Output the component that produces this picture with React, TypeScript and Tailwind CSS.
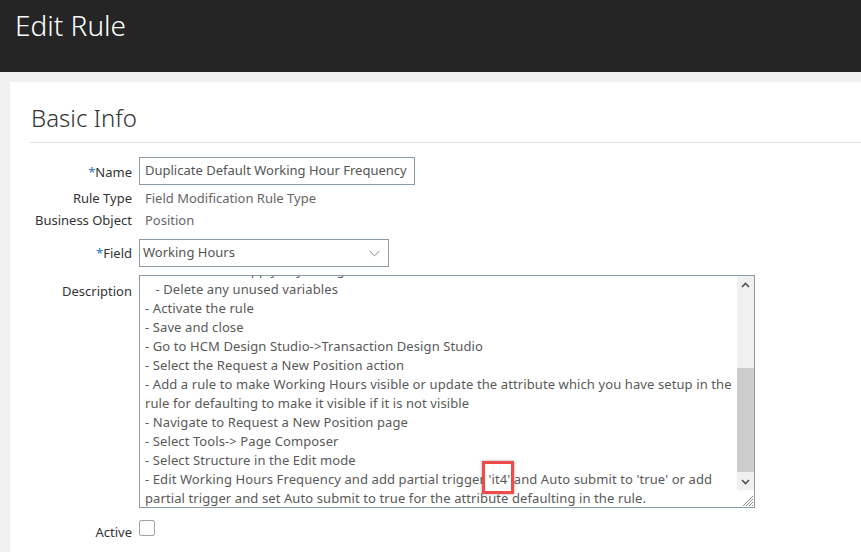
import React from "react";

const lines: string[] = [
  "   - Validate and apply any changes",
  "   - Delete any unused variables",
  "- Activate the rule",
  "- Save and close",
  "- Go to HCM Design Studio->Transaction Design Studio",
  "- Select the Request a New Position action",
  "- Add a rule to make Working Hours visible or update the attribute which you have setup in the",
  "rule for defaulting to make it visible if it is not visible",
  "- Navigate to Request a New Position page",
  "- Select Tools-> Page Composer",
  "- Select Structure in the Edit mode",
  "__IT4__",
  "partial trigger and set Auto submit to true for the attribute defaulting in the rule.",
];

function Label({ children, req }: { children: React.ReactNode; req?: boolean }) {
  return (
    <div className="w-[129px] shrink-0 pr-[7px] text-right text-[13px] text-[#333333]">
      {req && <span className="text-[#1d79c4]">*</span>}
      {children}
    </div>
  );
}

export default function App() {
  return (
    <div className="min-h-[552px] bg-[#f1f1f1]" style={{ fontFamily: '"Noto Sans", "Open Sans", sans-serif' }}>
      <div className="h-[72px] bg-[#252525] pl-[15px] pt-[5px]">
        <div className="text-[28px] font-light leading-[40px] text-white">Edit Rule</div>
      </div>
      <div className="ml-[10px] mt-[10px] min-h-[470px] bg-white pl-[20px] pt-[20px]">
        <div className="border-b border-[#dde3ea] pb-[8px] pl-[1px] text-[24px] font-light leading-[32px] text-[#333333]">
          Basic Info
        </div>
        <div className="ml-[-20px] pt-[14px]">
          {/* Name */}
          <div className="flex h-[28px] items-center">
            <div className="pt-[3px]">
              <Label req>Name</Label>
            </div>
            <div className="flex h-[28px] w-[276px] items-center border border-[#8d9ba7] px-[5px] text-[13px] text-[#555555] whitespace-nowrap overflow-hidden">
              Duplicate Default Working Hour Frequency
            </div>
          </div>
          {/* Rule Type */}
          <div className="mt-[2px] flex h-[23px] items-center">
            <Label>Rule Type</Label>
            <div className="pl-[6px] text-[13px] text-[#666666]">Field Modification Rule Type</div>
          </div>
          <div className="flex h-[22px] items-center">
            <Label>Business Object</Label>
            <div className="pl-[6px] text-[13px] text-[#666666]">Position</div>
          </div>
          {/* Field */}
          <div className="mt-[7px] flex h-[28px] items-center">
            <div className="pt-[2px]">
              <Label req>Field</Label>
            </div>
            <div className="flex h-[28px] w-[250px] items-center justify-between border border-[#8d9ba7] pl-[3px] pr-[8px] text-[13px] text-[#555555]">
              <span>Working Hours</span>
              <svg width="11" height="7" viewBox="0 0 11 7" fill="none">
                <path d="M0.5 0.8 L5.5 5.8 L10.5 0.8" stroke="#8a8a8a" strokeWidth="1" />
              </svg>
            </div>
          </div>
          {/* Description */}
          <div className="mt-[8px] flex">
            <div className="pt-[7px]">
              <Label>Description</Label>
            </div>
            <div className="relative h-[233px] w-[616px] border border-[#8d9ba7]">
              <div className="absolute inset-y-0 left-0 right-[17px] overflow-hidden pl-[5px]">
                <div className="mt-[-15px] text-[13px] leading-[19px] text-[#595959] whitespace-pre tracking-[0.1px]">
                  {lines.map((l, i) =>
                    l === "__IT4__" ? (
                      <div key={i}>
                        {"- Edit Working Hours Frequency and add partial trigger "}
                        <span className="relative">
                          'it4'
                          <span className="absolute left-[-6px] right-[-4px] top-[-9px] bottom-[-6px] border-[3px] border-[#f04a4a] shadow-[0_0_3px_rgba(0,0,0,0.35)]" />
                        </span>
                        {" and Auto submit to 'true' or add"}
                      </div>
                    ) : (
                      <div key={i}>{l}</div>
                    )
                  )}
                </div>
              </div>
              {/* scrollbar */}
              <div className="absolute right-0 top-0 bottom-0 flex w-[17px] flex-col">
                <div className="flex flex-1 flex-col bg-[#f0f0f0]">
                  <div className="flex h-[17px] items-center justify-center">
                    <svg width="9" height="6" viewBox="0 0 9 6">
                      <path d="M1 5 L4.5 1.5 L8 5" stroke="#505050" strokeWidth="1.6" fill="none" />
                    </svg>
                  </div>
                  <div className="h-[75px]" />
                  <div className="h-[104px] bg-[#cdcdcd]" />
                  <div className="flex-1" />
                  <div className="flex h-[17px] items-center justify-center">
                    <svg width="9" height="6" viewBox="0 0 9 6">
                      <path d="M1 1 L4.5 4.5 L8 1" stroke="#505050" strokeWidth="1.6" fill="none" />
                    </svg>
                  </div>
                </div>
                <div className="flex h-[17px] items-end justify-end bg-white">
                  <svg width="14" height="14" viewBox="0 0 14 14">
                    <path d="M13 3 L3 13 M13 6 L6 13 M13 9 L9 13 M13 12 L12 13" stroke="#8a8a8a" strokeWidth="1" />
                  </svg>
                </div>
              </div>
            </div>
          </div>
          {/* Active */}
          <div className="mt-[12px] flex items-start">
            <div className="pt-[3px]">
              <Label>Active</Label>
            </div>
            <div className="h-[16px] w-[16px] rounded-[2px] border border-[#a3a3a3] bg-white" />
          </div>
        </div>
      </div>
    </div>
  );
}
